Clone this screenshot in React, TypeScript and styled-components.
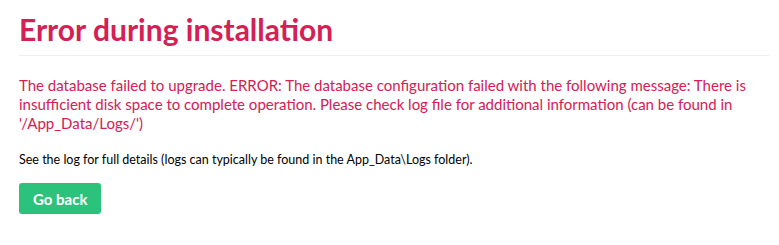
import React from "react";
import styled, { createGlobalStyle } from "styled-components";

const Global = createGlobalStyle`
  html, body { margin: 0; padding: 0; background: #fff; }
  body { font-family: Lato, "Open Sans", sans-serif; }
`;

const Page = styled.div`
  padding: 5px 10px 20px 19px;
`;

const Title = styled.h1`
  margin: 0;
  padding: 6px 0 8px;
  font-size: 30px;
  font-weight: 700;
  line-height: 36px;
  color: #d42054;
  border-bottom: 1px solid #eeeeee;
`;

const ErrorText = styled.p`
  margin: 20px 0 0;
  font-size: 15px;
  line-height: 19px;
  color: #d42054;
`;

const Note = styled.p`
  margin: 18px 0 0;
  font-size: 12.5px;
  line-height: 18px;
  color: #000;
`;

const Button = styled.button`
  margin-top: 14px;
  height: 31px;
  padding: 0 14px;
  border: none;
  border-radius: 3px;
  background: #2bc37c;
  color: #fff;
  font-family: Lato, sans-serif;
  font-size: 15px;
  font-weight: 700;
  cursor: pointer;
`;

export default function App() {
  return (
    <Page>
      <Global />
      <Title>Error during installation</Title>
      <ErrorText>
        The database failed to upgrade. ERROR: The database configuration failed with the following message: There is
        insufficient disk space to complete operation. Please check log file for additional information (can be found in
        '/App_Data/Logs/')
      </ErrorText>
      <Note>See the log for full details (logs can typically be found in the App_Data\Logs folder).</Note>
      <Button>Go back</Button>
    </Page>
  );
}
